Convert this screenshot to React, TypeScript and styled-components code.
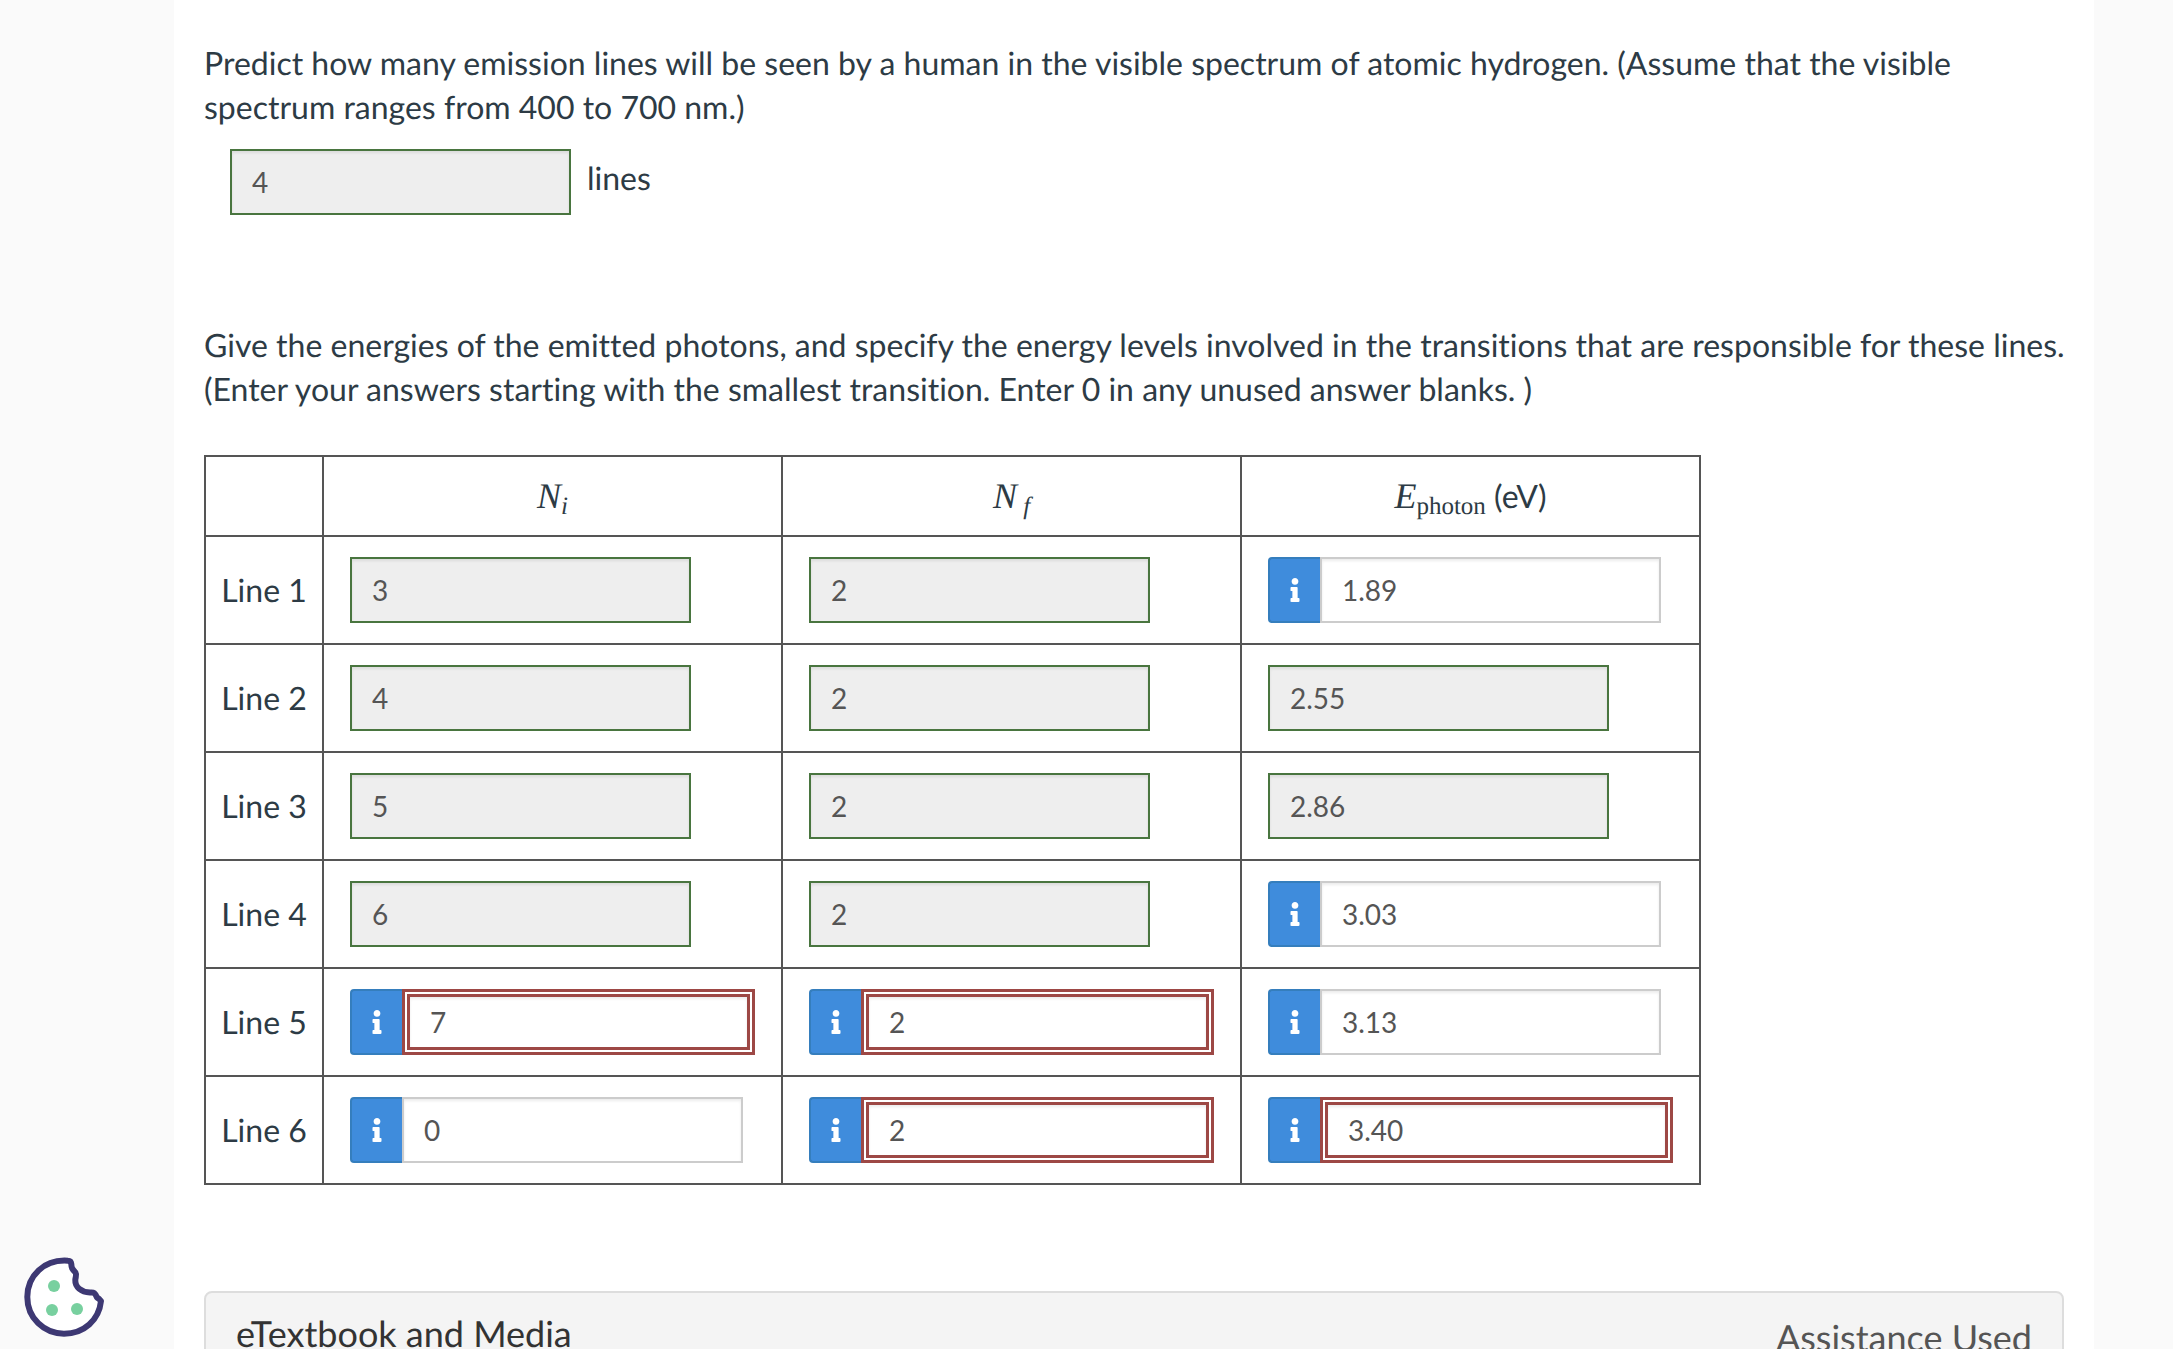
import React from "react";
import styled, { createGlobalStyle, css } from "styled-components";
import { FaInfo } from "react-icons/fa";

const Global = createGlobalStyle`
  *, *::before, *::after { box-sizing: border-box; }
  html { height: 100%; background: #fafafa; }
  body {
    margin: 0;
    height: 100%;
    overflow: hidden;
    background: #fafafa;
    color: #2d3b45;
    font-family: Lato, "Open Sans", sans-serif;
    font-size: 32px;
    line-height: 44px;
    font-variant-ligatures: none;
    text-rendering: geometricPrecision;
  }
`;

const Sheet = styled.main`
  margin: 0 79px 0 174px;
  padding: 41px 30px 0;
  background: #fff;
`;

const Question = styled.p`
  margin: 0 -16px 0 0;
`;

const AnswerLine = styled.div`
  display: flex;
  align-items: center;
  gap: 16px;
  margin: 20px 0 108px;
  padding-left: 26px;
`;

const Unit = styled.label`
  padding-bottom: 8px;
`;

const Grid = styled.table`
  margin: 44px 0 106px;
  border-collapse: collapse;

  th, td {
    border: 2px solid #555;
    padding: 0;
    font-weight: 400;
  }
`;

const HeadCell = styled.th<{ $width: number }>`
  width: ${(p) => p.$width}px;
  height: 80px;
  text-align: center;
`;

const RowLabel = styled.th`
  height: 108px;
  text-align: center;
`;

const AnswerCell = styled.td`
  && { padding: 0 26px; }
`;

const MathText = styled.span`
  font-family: "Liberation Serif", "Times New Roman", serif;
  font-size: 36px;
`;

const Sub = styled.sub`
  font-size: 25px;
  line-height: 0;
  vertical-align: -6px;
`;

type Status = "correct" | "neutral" | "wrong";

const statusStyles = {
  correct: css`
    width: 341px;
    background: #eee;
    border: 2px solid #49753f;
    padding: 0 20px;
  `,
  neutral: css`
    width: 341px;
    background: #fff;
    border: 2px solid #ccc;
    padding: 0 20px;
  `,
  wrong: css`
    width: 353px;
    background: #fff;
    border: 8px double #9d4845;
    padding: 0 20px;
  `,
};

const Field = styled.div`
  display: flex;
  height: 66px;
`;

const TextBox = styled.input<{ $status: Status }>`
  height: 66px;
  border-radius: 0;
  outline: none;
  color: #555;
  font: 400 28px/36px Lato, "Open Sans", sans-serif;
  box-shadow: inset 0 2px 3px rgba(0, 0, 0, 0.08);
  ${(p) => statusStyles[p.$status]}
`;

const InfoButton = styled.button`
  display: flex;
  align-items: center;
  justify-content: center;
  width: 52px;
  height: 66px;
  padding: 0;
  border: 2px solid #357ebd;
  border-right: 0;
  border-radius: 4px 0 0 4px;
  background: #3f8cdc;
  color: #fff;
`;

const Resource = styled.section`
  display: flex;
  justify-content: space-between;
  padding: 18px 30px;
  border: 2px solid #ddd;
  border-radius: 8px;
  background: #f4f4f4;
  font-size: 36px;
`;

const ResourceTitle = styled.h2`
  margin: 0;
  font-size: 36px;
  font-weight: 400;
  line-height: 44px;
  color: #333;
`;

const Assistance = styled.span`
  padding-top: 4px;
  color: #555;
`;

const CookieButton = styled.button`
  position: fixed;
  left: 22px;
  bottom: 10px;
  width: 84px;
  height: 84px;
  padding: 0;
  border: 0;
  background: transparent;

  svg { display: block; }
`;

const Answer = ({ id, label, value, status }: { id?: string; label?: string; value: string; status: Status }) => (
  <Field>
    {status !== "correct" && (
      <InfoButton type="button" aria-label="Show feedback">
        <FaInfo size={24} />
      </InfoButton>
    )}
    <TextBox id={id} aria-label={label} defaultValue={value} readOnly={status === "correct"} $status={status} />
  </Field>
);

const columns = ["N i", "N f", "E photon"];

const rows: [string, Status][][] = [
  [["3", "correct"], ["2", "correct"], ["1.89", "neutral"]],
  [["4", "correct"], ["2", "correct"], ["2.55", "correct"]],
  [["5", "correct"], ["2", "correct"], ["2.86", "correct"]],
  [["6", "correct"], ["2", "correct"], ["3.03", "neutral"]],
  [["7", "wrong"], ["2", "wrong"], ["3.13", "neutral"]],
  [["0", "neutral"], ["2", "wrong"], ["3.40", "wrong"]],
];

export default function App() {
  return (
    <>
      <Global />
      <Sheet>
        <Question>
          Predict how many emission lines will be seen by a human in the visible spectrum of atomic hydrogen. (Assume
          that the visible spectrum ranges from 400 to 700 nm.)
        </Question>
        <AnswerLine>
          <Answer id="line-count" value="4" status="correct" />
          <Unit htmlFor="line-count">lines</Unit>
        </AnswerLine>
        <Question>
          Give the energies of the emitted photons, and specify the energy levels involved in the transitions that are
          responsible for these lines. (Enter your answers starting with the smallest transition. Enter 0 in any unused
          answer blanks. )
        </Question>
        <Grid>
          <thead>
            <tr>
              <HeadCell $width={118} />
              <HeadCell $width={459} scope="col">
                <MathText><i>N</i><Sub><i>i</i></Sub></MathText>
              </HeadCell>
              <HeadCell $width={459} scope="col">
                <MathText><i>N</i><Sub> <i>f</i></Sub></MathText>
              </HeadCell>
              <HeadCell $width={459} scope="col">
                <MathText><i>E</i><Sub>photon</Sub></MathText> (eV)
              </HeadCell>
            </tr>
          </thead>
          <tbody>
            {rows.map((cells, r) => (
              <tr key={r}>
                <RowLabel scope="row">Line {r + 1}</RowLabel>
                {cells.map(([value, status], c) => (
                  <AnswerCell key={c}>
                    <Answer label={`Line ${r + 1}, ${columns[c]}`} value={value} status={status} />
                  </AnswerCell>
                ))}
              </tr>
            ))}
          </tbody>
        </Grid>
        <Resource>
          <ResourceTitle>eTextbook and Media</ResourceTitle>
          <Assistance>Assistance Used</Assistance>
        </Resource>
      </Sheet>
      <CookieButton type="button" aria-label="Cookie preferences">
        <svg width="84" height="84" viewBox="0 0 84 84" fill="none">
          <path
            d="M46 5.7 C22 4 5.3 21 5.3 42 C5.3 63 22 78.7 42 78.7 C62 78.7 77 65 79 46 Q77 43.500 75 42.500 C73 38 72 37 68 37.500 C59 37 53 32 53.300 25 C53.500 22 55 20 53.500 17.500 C50 14 49.500 13 49.300 9 Q49 5.700 46 5.700Z"
            fill="#fff"
            stroke="#3d3873"
            strokeWidth="6"
            strokeLinejoin="round"
          />
          <circle cx="32" cy="31" r="6" fill="#78d09f" />
          <circle cx="30" cy="55" r="6" fill="#78d09f" />
          <circle cx="55" cy="54" r="6" fill="#78d09f" />
        </svg>
      </CookieButton>
    </>
  );
}
